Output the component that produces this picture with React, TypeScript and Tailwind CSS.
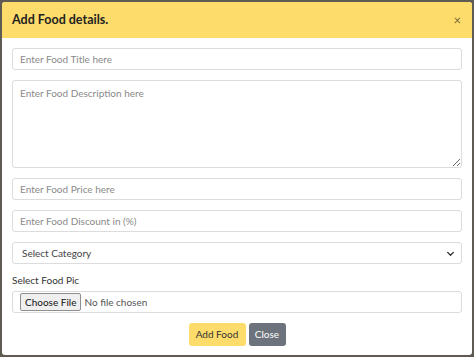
import React from 'react';

const field =
  'h-[22px] w-full border border-[#dcdcdc] rounded-[3px] px-[7px] text-[10px] placeholder:text-[#8a8a8a] outline-none';

export default function App() {
  return (
    <div className="w-[474px] h-[357px] bg-[#5f5b52] p-[2px] font-['Lato',sans-serif]">
      <div className="h-[353px] bg-white rounded-[3px] overflow-hidden flex flex-col">
        {/* Header */}
        <div className="h-[36px] bg-[#fddc6b] flex items-center justify-between pl-[10px] pr-[11px] shrink-0">
          <h1 className="text-[12.5px] font-bold text-[#222]">Add Food details.</h1>
          <button className="text-[#7a6a3a] text-[13px] leading-none">×</button>
        </div>

        {/* Body */}
        <div className="flex flex-col px-[10px] pt-[10px]">
          <input className={field} placeholder="Enter Food Title here" />
          <textarea
            className="mt-[10px] h-[88px] w-full border border-[#dcdcdc] rounded-[3px] px-[7px] py-[5px] text-[10px] placeholder:text-[#8a8a8a] outline-none"
            placeholder="Enter Food Description here"
          />
          <input className={`mt-[10px] ${field}`} placeholder="Enter Food Price here" />
          <input className={`mt-[10px] ${field}`} placeholder="Enter Food Discount in (%)" />
          <div className="mt-[10px] h-[22px] w-full border border-[#dcdcdc] rounded-[3px] pl-[9px] pr-[6px] flex items-center justify-between text-[10px] text-[#444]">
            <span>Select Category</span>
            <svg width="9" height="9" viewBox="0 0 16 16" fill="none" stroke="#333" strokeWidth="2.5" strokeLinecap="round" strokeLinejoin="round">
              <path d="M3 6l5 5 5-5" />
            </svg>
          </div>
          <label className="mt-[9px] text-[10px] leading-[14px] text-[#333]">Select Food Pic</label>
          <div className="mt-[4px] h-[22px] w-full border border-[#dcdcdc] rounded-[3px] px-[7px] flex items-center text-[10px]">
            <span className="h-[18px] px-[4px] bg-[#efefef] border border-[#8f8f8f] rounded-[2px] flex items-center text-[#111]">Choose File</span>
            <span className="ml-[3px] text-[#555]">No file chosen</span>
          </div>
          <div className="mt-[10px] flex justify-center gap-[3px]">
            <button className="h-[23px] w-[57px] bg-[#fddc6b] rounded-[3px] text-[10px] text-[#333]">Add Food</button>
            <button className="h-[23px] w-[37px] bg-[#6c737c] rounded-[3px] text-[10px] text-white">Close</button>
          </div>
        </div>
      </div>
    </div>
  );
}
